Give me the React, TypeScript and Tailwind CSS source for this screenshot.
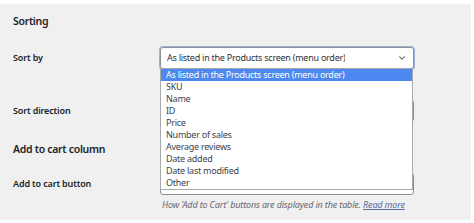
import { ChevronDown } from "lucide-react";

const sortOptions = [
  "As listed in the Products screen (menu order)",
  "SKU",
  "Name",
  "ID",
  "Price",
  "Number of sales",
  "Average reviews",
  "Date added",
  "Date last modified",
  "Other",
];

function Select({ value }: { value: string }) {
  return (
    <div className="w-[254px] h-[22px] flex items-center justify-between pl-[6px] pr-[6px] bg-white border border-[#8c8f94] rounded-[3px] text-[9px] tracking-[-0.25px] text-[#2c3338]">
      <span className="truncate">{value}</span>
      <ChevronDown className="w-[10px] h-[10px] text-[#50575e]" strokeWidth={2.5} />
    </div>
  );
}

function Row({ label, children }: { label: string; children?: React.ReactNode }) {
  return (
    <div className="flex items-center h-[22px]">
      <div className="w-[147px] text-[9px] tracking-[-0.15px] font-semibold text-[#1d2327]">{label}</div>
      {children}
    </div>
  );
}

export default function App() {
  return (
    <div
      className="w-[474px] h-[223px] bg-white pt-[4px] pr-[3px] pb-[3px] overflow-hidden"
      style={{ fontFamily: '"Noto Sans", "Open Sans", sans-serif' }}
    >
      <div className="relative h-full bg-[#f0f0f1] pl-[13px]">
        <div className="h-[36px] flex items-center text-[10.5px] tracking-[-0.3px] font-semibold text-[#1d2327]">Sorting</div>

        <div className="mt-[7px]">
          <Row label="Sort by">
            <div className="rounded-[3px] ring-1 ring-[#9ab2d8]">
              <Select value="As listed in the Products screen (menu order)" />
            </div>
          </Row>
        </div>

        <div className="mt-[31px]">
          <Row label="Sort direction">
            <Select value="Ascending" />
          </Row>
        </div>

        <div className="mt-[10px] h-[36px] flex items-center text-[10.5px] tracking-[-0.3px] font-semibold text-[#1d2327]">
          Add to cart column
        </div>

        <div className="mt-[5px]">
          <Row label="Add to cart button">
            <Select value="Button" />
          </Row>
        </div>

        <p className="mt-[3px] ml-[149px] h-[14px] leading-[14px] text-[9px] tracking-[-0.15px] italic text-[#646970]">
          How 'Add to Cart' buttons are displayed in the table.{" "}
          <span className="underline text-[#4f6f9f]">Read more</span>
        </p>

        {/* open dropdown list */}
        <ul className="absolute left-[160px] top-[64px] w-[253px] bg-white border border-[#a7aaad] text-[9px] tracking-[-0.25px] text-[#3c434a]">
          {sortOptions.map((o, i) => (
            <li
              key={o}
              className={
                i === 0
                  ? "h-[12px] leading-[12px] pl-[5px] bg-[#4c88f0] text-white"
                  : "h-[12px] leading-[12px] pl-[5px]"
              }
            >
              {o}
            </li>
          ))}
        </ul>
      </div>
    </div>
  );
}
